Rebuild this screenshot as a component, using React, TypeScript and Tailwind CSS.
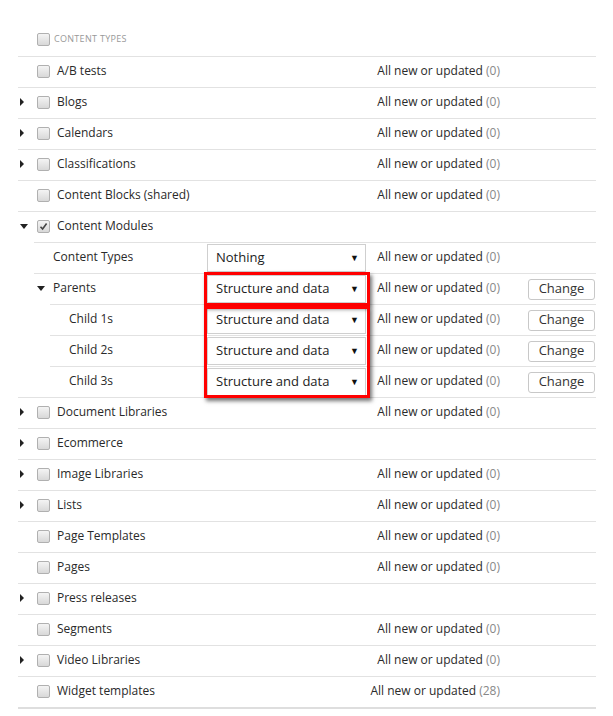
import React from "react";

type Row = {
  label: string;
  level: 0 | 1 | 2;
  caret?: "right" | "down";
  checkbox?: boolean;
  checked?: boolean;
  select?: string;
  count?: number;
  button?: boolean;
};

const rows: Row[] = [
  { label: "A/B tests", level: 0, checkbox: true, count: 0 },
  { label: "Blogs", level: 0, caret: "right", checkbox: true, count: 0 },
  { label: "Calendars", level: 0, caret: "right", checkbox: true, count: 0 },
  { label: "Classifications", level: 0, caret: "right", checkbox: true, count: 0 },
  { label: "Content Blocks (shared)", level: 0, checkbox: true, count: 0 },
  { label: "Content Modules", level: 0, caret: "down", checkbox: true, checked: true },
  { label: "Content Types", level: 1, select: "Nothing", count: 0 },
  { label: "Parents", level: 1, caret: "down", select: "Structure and data", count: 0, button: true },
  { label: "Child 1s", level: 2, select: "Structure and data", count: 0, button: true },
  { label: "Child 2s", level: 2, select: "Structure and data", count: 0, button: true },
  { label: "Child 3s", level: 2, select: "Structure and data", count: 0, button: true },
  { label: "Document Libraries", level: 0, caret: "right", checkbox: true, count: 0 },
  { label: "Ecommerce", level: 0, caret: "right", checkbox: true },
  { label: "Image Libraries", level: 0, caret: "right", checkbox: true, count: 0 },
  { label: "Lists", level: 0, caret: "right", checkbox: true, count: 0 },
  { label: "Page Templates", level: 0, checkbox: true, count: 0 },
  { label: "Pages", level: 0, checkbox: true, count: 0 },
  { label: "Press releases", level: 0, caret: "right", checkbox: true },
  { label: "Segments", level: 0, checkbox: true, count: 0 },
  { label: "Video Libraries", level: 0, caret: "right", checkbox: true, count: 0 },
  { label: "Widget templates", level: 0, checkbox: true, count: 28 },
];

function Checkbox({ checked }: { checked?: boolean }) {
  return (
    <span className="w-[13px] h-[13px] rounded-[2px] border border-[#b0b0b0] bg-gradient-to-b from-[#f4f4f4] to-[#d8d8d8] flex items-center justify-center shrink-0">
      {checked && (
        <svg width="9" height="9" viewBox="0 0 9 9">
          <path d="M1.5 4.8 L3.6 7 L7.6 1.6" fill="none" stroke="#444" strokeWidth="1.6" />
        </svg>
      )}
    </span>
  );
}

function Caret({ dir }: { dir: "right" | "down" }) {
  if (dir === "right") {
    return (
      <span className="w-0 h-0 border-y-[4px] border-y-transparent border-l-[4px] border-l-[#222]" />
    );
  }
  return (
    <span className="w-0 h-0 border-x-[4px] border-x-transparent border-t-[5px] border-t-[#222]" />
  );
}

function Select({ value }: { value: string }) {
  return (
    <div className="w-[159px] h-[28px] border border-[#cfcfcf] bg-white flex items-center justify-between pl-[8px] pr-[6px] text-[13px] text-[#222]">
      <span>{value}</span>
      <span className="text-[9px] text-[#111]">▼</span>
    </div>
  );
}

function RowLine({ level }: { level: number }) {
  const ml = level === 0 ? "ml-0" : level === 1 ? "ml-[16px]" : "ml-[32px]";
  return <div className={`h-px bg-[#e2e2e2] ${ml}`} />;
}

function TypeRow({ row }: { row: Row }) {
  let left: React.ReactNode;
  if (row.level === 0) {
    left = (
      <div className="flex items-center pl-[2px]">
        <span className="w-[17px] flex items-center">{row.caret && <Caret dir={row.caret} />}</span>
        <Checkbox checked={row.checked} />
        <span className="ml-[7px]">{row.label}</span>
      </div>
    );
  } else if (row.level === 1) {
    left = (
      <div className="flex items-center pl-[19px]">
        <span className="w-[16px] flex items-center">{row.caret && <Caret dir={row.caret} />}</span>
        <span>{row.label}</span>
      </div>
    );
  } else {
    left = (
      <div className="flex items-center pl-[51px]">
        <span>{row.label}</span>
      </div>
    );
  }
  return (
    <div className="h-[30px] flex items-center pb-[2px]">
      <div className="w-[189px] shrink-0">{left}</div>
      <div className="w-[159px] shrink-0 mt-[2px]">{row.select && <Select value={row.select} />}</div>
      <div className="w-[135px] shrink-0 text-right pr-[1px]">
        {row.count !== undefined && (
          <span>
            All new or updated <span className="text-[#888]">({row.count})</span>
          </span>
        )}
      </div>
      <div className="ml-[27px] mt-[2px]">
        {row.button && (
          <button className="w-[67px] h-[21px] border border-[#c8c8c8] rounded-[3px] bg-white text-[13px] text-[#333] flex items-center justify-center">
            Change
          </button>
        )}
      </div>
    </div>
  );
}

export default function App() {
  return (
    <div
      className="relative w-[613px] h-[716px] bg-white text-[12px] text-[#2a2a2a]"
      style={{ fontFamily: '"Open Sans", "Liberation Sans", sans-serif' }}
    >
      <div className="ml-[18px] w-[578px] pt-[26px]">
        <div className="h-[30px] flex items-center pl-[19px] pb-[4px]">
          <Checkbox />
          <span className="ml-[4px] text-[9px] tracking-[0.3px] text-[#999]">CONTENT TYPES</span>
        </div>
        {rows.map((row) => (
          <div key={row.label}>
            <RowLine level={row.level} />
            <TypeRow row={row} />
          </div>
        ))}
        <div className="h-[2px] bg-[#dedede]" />
      </div>

      {/* red highlight annotations */}
      <div className="absolute left-[204px] top-[272px] w-[166px] h-[34px] border-[3px] border-[#f00] shadow-[2px_3px_4px_rgba(0,0,0,0.55)]" />
      <div className="absolute left-[204px] top-[306px] w-[166px] h-[92px] border-[3px] border-[#f00] shadow-[2px_3px_4px_rgba(0,0,0,0.55)]" />
    </div>
  );
}
